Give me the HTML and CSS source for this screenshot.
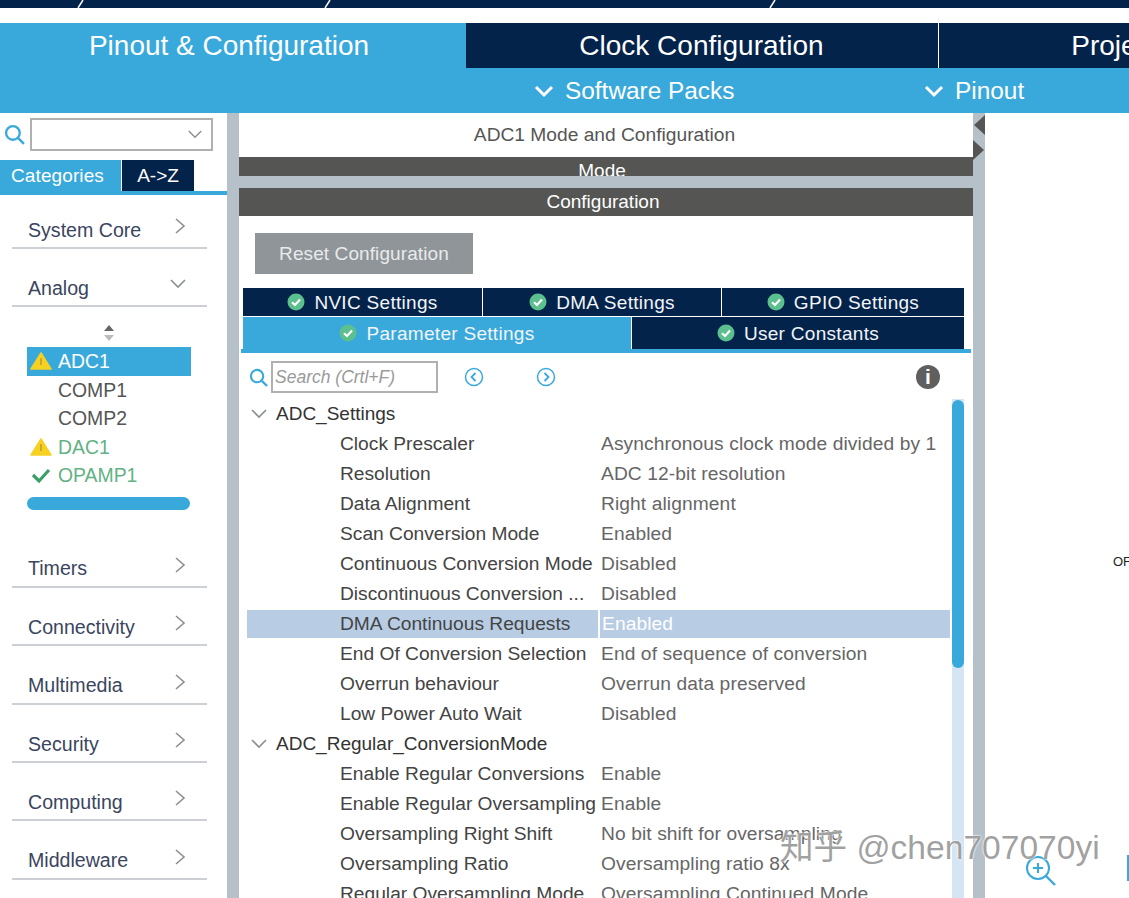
FILE: index.html
```html
<!DOCTYPE html>
<html lang="en">
<head>
    <meta charset="UTF-8">
    <meta name="viewport" content="width=device-width, initial-scale=1.0">
    <title>Pinout &amp; Configuration</title>
    <link rel="stylesheet" href="styles.css">
</head>
<body>
    <svg class="sprite" width="0" height="0">
        <symbol id="ok" viewBox="0 0 18 18">
            <circle cx="9" cy="9" r="8.5" fill="#5cbf8e"/>
            <path d="M5 9.2l3 2.8 5-5.4" fill="none" stroke="#fff" stroke-width="2.2"/>
        </symbol>
        <symbol id="warn" viewBox="0 0 22 18">
            <path d="M11 1L21 17H1z" fill="#f6d122" stroke="#f6d122" stroke-width="1.5" stroke-linejoin="round"/>
            <path d="M11 6v7" stroke="#b89a30" stroke-width="1.4"/>
        </symbol>
        <symbol id="lens" viewBox="0 0 20 20">
            <circle cx="8.5" cy="8.5" r="6.5" fill="none" stroke="#39a9dc" stroke-width="2.2"/>
            <path d="M13.5 13.5L19 19" stroke="#39a9dc" stroke-width="2.4"/>
        </symbol>
        <symbol id="right" viewBox="0 0 14 18">
            <path d="M3 2l8 7-8 7" fill="none" stroke="#8a8f94" stroke-width="1.6"/>
        </symbol>
        <symbol id="down" viewBox="0 0 18 12">
            <path d="M2 2l7 7 7-7" fill="none" stroke="#8a8f94" stroke-width="1.6"/>
        </symbol>
    </svg>

    <div class="app">
        <!-- window strip -->
        <div class="strip">
            <svg class="strip-art" width="1129" height="8">
                <path d="M78 8l5-8M325 8l5-8M770 8l5-8" stroke="#fff" stroke-width="1.5"/>
            </svg>
        </div>

        <!-- main tabs -->
        <div class="main-tabs">
            <div class="main-tab active">Pinout &amp; Configuration</div>
            <div class="main-tab clock">Clock Configuration</div>
            <div class="main-tab project">Project Manager</div>
        </div>
        <div class="sub-bar">
            <div class="sub-item packs">
                <svg class="sub-chev" width="20" height="14" viewBox="0 0 20 14"><path d="M2 3l8 8 8-8" fill="none" stroke="#fff" stroke-width="3"/></svg>
                Software Packs
            </div>
            <div class="sub-item">
                <svg class="sub-chev" width="20" height="14" viewBox="0 0 20 14"><path d="M2 3l8 8 8-8" fill="none" stroke="#fff" stroke-width="3"/></svg>
                Pinout
            </div>
        </div>

        <div class="workspace">
            <!-- left categories -->
            <aside class="sidebar">
                <div class="find">
                    <svg class="find-icon" width="21" height="21"><use href="#lens"/></svg>
                    <div class="find-box">
                        <svg width="16" height="11"><use href="#down"/></svg>
                    </div>
                </div>
                <div class="side-tabs">
                    <div class="side-tab active">Categories</div>
                    <div class="side-tab">A-&gt;Z</div>
                </div>
                <div class="cat first"><span>System Core</span><svg width="14" height="18"><use href="#right"/></svg></div>
                <div class="cat"><span>Analog</span><svg width="18" height="12"><use href="#down"/></svg></div>
                <div class="sort">
                    <svg width="12" height="18" viewBox="0 0 12 18"><path d="M6 1l5 6H1z" fill="#666"/><path d="M6 17l5-6H1z" fill="#bbb"/></svg>
                </div>
                <ul class="periph">
                    <li class="selected"><svg width="22" height="18"><use href="#warn"/></svg>ADC1</li>
                    <li>COMP1</li>
                    <li>COMP2</li>
                    <li class="green"><svg width="22" height="18"><use href="#warn"/></svg>DAC1</li>
                    <li class="green"><svg width="22" height="18" viewBox="0 0 22 18"><path d="M3 9l6 6 10-11" fill="none" stroke="#3c9f68" stroke-width="3.2"/></svg>OPAMP1</li>
                </ul>
                <div class="side-scroll"></div>
                <div class="cat timers"><span>Timers</span><svg width="14" height="18"><use href="#right"/></svg></div>
                <div class="cat"><span>Connectivity</span><svg width="14" height="18"><use href="#right"/></svg></div>
                <div class="cat"><span>Multimedia</span><svg width="14" height="18"><use href="#right"/></svg></div>
                <div class="cat"><span>Security</span><svg width="14" height="18"><use href="#right"/></svg></div>
                <div class="cat"><span>Computing</span><svg width="14" height="18"><use href="#right"/></svg></div>
                <div class="cat"><span>Middleware</span><svg width="14" height="18"><use href="#right"/></svg></div>
            </aside>

            <div class="splitter"></div>

            <!-- centre panel -->
            <section class="panel">
                <div class="panel-title">ADC1 Mode and Configuration</div>
                <div class="bar mode">Mode</div>
                <div class="bar-gap"></div>
                <div class="bar config">Configuration</div>
                <div class="reset-wrap">
                    <div class="reset">Reset Configuration</div>
                </div>

                <div class="set-tabs row-one">
                    <div class="set-tab nvic"><svg width="18" height="18"><use href="#ok"/></svg>NVIC Settings</div>
                    <div class="set-tab dma"><svg width="18" height="18"><use href="#ok"/></svg>DMA Settings</div>
                    <div class="set-tab"><svg width="18" height="18"><use href="#ok"/></svg>GPIO Settings</div>
                </div>
                <div class="set-tabs row-two">
                    <div class="set-tab active"><svg width="18" height="18"><use href="#ok"/></svg>Parameter Settings</div>
                    <div class="set-tab"><svg width="18" height="18"><use href="#ok"/></svg>User Constants</div>
                </div>

                <div class="search-row">
                    <svg class="search-icon" width="19" height="19"><use href="#lens"/></svg>
                    <div class="search-box">Search (Crtl+F)</div>
                    <svg class="nav-btn first-nav" width="20" height="20" viewBox="0 0 20 20"><circle cx="10" cy="10" r="8.5" fill="none" stroke="#39a9dc" stroke-width="1.5"/><path d="M11.5 6l-4 4 4 4" fill="none" stroke="#39a9dc" stroke-width="1.8"/></svg>
                    <svg class="nav-btn" width="20" height="20" viewBox="0 0 20 20"><circle cx="10" cy="10" r="8.5" fill="none" stroke="#39a9dc" stroke-width="1.5"/><path d="M8.5 6l4 4-4 4" fill="none" stroke="#39a9dc" stroke-width="1.8"/></svg>
                    <div class="info">i</div>
                </div>

                <div class="params">
                    <div class="tree">
                        <div class="head"><svg width="18" height="12"><use href="#down"/></svg>ADC_Settings</div>
                        <div class="row"><span>Clock Prescaler</span><span>Asynchronous clock mode divided by 1</span></div>
                        <div class="row"><span>Resolution</span><span>ADC 12-bit resolution</span></div>
                        <div class="row"><span>Data Alignment</span><span>Right alignment</span></div>
                        <div class="row"><span>Scan Conversion Mode</span><span>Enabled</span></div>
                        <div class="row"><span>Continuous Conversion Mode</span><span>Disabled</span></div>
                        <div class="row"><span>Discontinuous Conversion ...</span><span>Disabled</span></div>
                        <div class="row picked"><span>DMA Continuous Requests</span><span>Enabled</span></div>
                        <div class="row"><span>End Of Conversion Selection</span><span>End of sequence of conversion</span></div>
                        <div class="row"><span>Overrun behaviour</span><span>Overrun data preserved</span></div>
                        <div class="row"><span>Low Power Auto Wait</span><span>Disabled</span></div>
                        <div class="head"><svg width="18" height="12"><use href="#down"/></svg>ADC_Regular_ConversionMode</div>
                        <div class="row"><span>Enable Regular Conversions</span><span>Enable</span></div>
                        <div class="row"><span>Enable Regular Oversampling</span><span>Enable</span></div>
                        <div class="row"><span>Oversampling Right Shift</span><span>No bit shift for oversampling</span></div>
                        <div class="row"><span>Oversampling Ratio</span><span>Oversampling ratio 8x</span></div>
                        <div class="row"><span>Regular Oversampling Mode</span><span>Oversampling Continued Mode</span></div>
                    </div>
                    <div class="track"><div class="thumb"></div></div>
                </div>
            </section>

            <div class="splitter right-split">
                <svg class="collapse" width="12" height="50" viewBox="0 0 12 50"><path d="M12 1v20L1 11z" fill="#555"/><path d="M0 26v20l11-10z" fill="#555"/></svg>
            </div>

            <!-- chip canvas -->
            <section class="canvas">
                <span class="pin-label">OF</span>
                <svg class="zoom-in" width="32" height="32" viewBox="0 0 32 32"><circle cx="13" cy="13" r="11" fill="none" stroke="#39a9dc" stroke-width="2"/><path d="M13 8v10M8 13h10" stroke="#39a9dc" stroke-width="2"/><path d="M21 21l9 9" stroke="#39a9dc" stroke-width="2.4"/></svg>
                <div class="edge-tool"></div>
            </section>
        </div>

        <div class="watermark">知乎 @chen707070yi</div>
    </div>
</body>
</html>
```

FILE: styles.css
```css
* {
    box-sizing: border-box;
}
body {
    margin: 0;
    background: #fff;
    font-family: "Liberation Sans", Arial, sans-serif;
    color: #444;
}
.sprite {
    position: absolute;
}
.app {
    position: relative;
    width: 1129px;
    height: 898px;
    overflow: hidden;
    display: flex;
    flex-direction: column;
}
.strip {
    height: 8px;
    background: #03234b;
    margin-bottom: 15px;
    flex: none;
}
.strip-art {
    display: block;
}

/* main tabs */
.main-tabs {
    display: flex;
    height: 45px;
    flex: none;
    background: #03234b;
    overflow: hidden;
}
.main-tab {
    flex: none;
    font-size: 28px;
    line-height: 46px;
    color: #fff;
    text-align: center;
    white-space: nowrap;
}
.main-tab.active {
    width: 466px;
    background: #39a9dc;
    padding-right: 8px;
}
.main-tab.clock {
    width: 472px;
    margin-left: 1px;
    border-right: 1px solid #fff;
    padding-right: 2px;
}
.main-tab.project {
    width: 470px;
}
.sub-bar {
    display: flex;
    height: 45px;
    flex: none;
    background: #39a9dc;
    padding-left: 534px;
}
.sub-item {
    display: flex;
    align-items: center;
    gap: 11px;
    font-size: 24.4px;
    color: #fff;
    white-space: nowrap;
}
.sub-item.packs {
    width: 390px;
}

.workspace {
    flex: 1;
    display: flex;
    min-height: 0;
}

/* sidebar */
.sidebar {
    width: 227px;
    flex: none;
    background: #fff;
    overflow: hidden;
}
.find {
    display: flex;
    align-items: center;
    height: 47px;
    padding: 5px 14px 9px 4px;
    gap: 5px;
}
.find-box {
    flex: 1;
    height: 33px;
    border: 2px solid #b0b0b0;
    display: flex;
    align-items: center;
    justify-content: flex-end;
    padding-right: 8px;
}
.side-tabs {
    display: flex;
    height: 35px;
    border-bottom: 4px solid #39a9dc;
}
.side-tab {
    width: 72px;
    background: #03234b;
    color: #fff;
    font-size: 19px;
    line-height: 31px;
    text-align: center;
}
.side-tab.active {
    width: 122px;
    background: #39a9dc;
    border-right: 1px solid #fff;
    letter-spacing: 0.1px;
    padding-right: 6px;
}
.cat {
    display: flex;
    align-items: center;
    justify-content: space-between;
    width: 195px;
    height: 40px;
    margin: 18.4px 0 0 12px;
    padding: 4px 20px 0 16px;
    border-bottom: 2px solid #ccd0d4;
    font-size: 19.6px;
    color: #3a4560;
}
.cat.first {
    margin-top: 14px;
}
.cat svg {
    margin-top: -8px;
}
.sort {
    display: flex;
    justify-content: center;
    width: 218px;
    padding-top: 17px;
    height: 40px;
}
.periph {
    list-style: none;
    margin: 0;
    padding: 0 0 0 27px;
    width: 191px;
    box-sizing: content-box;
}
.periph li {
    display: flex;
    align-items: center;
    height: 28.5px;
    padding-left: 31px;
    font-size: 19.4px;
    color: #555;
    position: relative;
    width: 164px;
}
.periph li svg {
    position: absolute;
    left: 3px;
    top: 5px;
}
.periph li.selected {
    background: #39a9dc;
    color: #fff;
}
.periph li.green {
    color: #62b283;
}
.side-scroll {
    width: 163px;
    height: 13px;
    margin: 7px 0 0 27px;
    background: #39a9dc;
    border-radius: 7px;
}
.cat.timers {
    margin-top: 38px;
}
.splitter {
    width: 12px;
    flex: none;
    background: #b5c0c8;
}

/* centre panel */
.panel {
    width: 734px;
    flex: none;
    display: flex;
    flex-direction: column;
    overflow: hidden;
}
.panel-title {
    height: 44px;
    flex: none;
    line-height: 44px;
    text-align: center;
    font-size: 19.2px;
    color: #555;
    padding-right: 3px;
}
.bar {
    flex: none;
    background: #555654;
    color: #fff;
    text-align: center;
    font-size: 19px;
    overflow: hidden;
    padding-right: 8px;
}
.bar.mode {
    height: 19px;
    line-height: 27px;
}
.bar-gap {
    height: 12px;
    flex: none;
    background: #b5c0c8;
}
.bar.config {
    height: 28px;
    line-height: 28px;
    padding-right: 6px;
}
.reset-wrap {
    flex: none;
    height: 72px;
    padding: 17px 0 0 16px;
}
.reset {
    width: 218px;
    height: 41px;
    line-height: 41px;
    background: #8f9599;
    color: #e8eaec;
    text-align: center;
    font-size: 19px;
    letter-spacing: 0.1px;
}
.set-tabs {
    flex: none;
    display: flex;
    gap: 1px;
    width: 721px;
    margin-left: 4px;
    background: #fff;
}
.set-tabs.row-one {
    height: 28px;
    margin-bottom: 1px;
}
.set-tabs.row-two {
    height: 32px;
}
.set-tab {
    flex: 1;
    display: flex;
    align-items: center;
    justify-content: center;
    gap: 9px;
    padding-top: 2px;
    background: #03234b;
    color: #f2f4f8;
    font-size: 19px;
    letter-spacing: 0.3px;
}
.set-tab svg {
    margin-top: -2px;
}
.set-tab.nvic {
    flex: none;
    width: 239px;
}
.set-tab.dma {
    flex: none;
    width: 238px;
}
.set-tab.active {
    background: #39a9dc;
    flex: none;
    width: 388px;
}
.search-row {
    flex: none;
    position: relative;
    height: 50px;
    margin-left: 2px;
    border-top: 4px solid #39a9dc;
    width: 730px;
    display: flex;
    align-items: center;
    padding: 2px 0 0 8px;
}
.search-box {
    width: 167px;
    height: 32px;
    margin-left: 3px;
    border: 2px solid #b0b0b0;
    color: #9a9a9a;
    font-style: italic;
    font-size: 17.5px;
    line-height: 28px;
    padding-left: 2px;
    white-space: nowrap;
    overflow: hidden;
}
.nav-btn {
    margin-left: 52px;
}
.nav-btn.first-nav {
    margin-left: 26px;
}
.info {
    width: 24px;
    height: 24px;
    margin-left: 360px;
    border-radius: 50%;
    background: #5f5f5f;
    color: #fff;
    font-size: 21px;
    font-weight: bold;
    line-height: 24px;
    text-align: center;
}
.params {
    flex: 1;
    min-height: 0;
    display: flex;
    margin-left: 8px;
    overflow: hidden;
}
.tree {
    width: 703px;
    flex: none;
}
.head {
    display: flex;
    align-items: center;
    height: 30px;
    font-size: 19px;
    color: #333;
    padding-left: 3px;
    gap: 8px;
}
.row {
    display: grid;
    grid-template-columns: 258px 1fr;
    height: 30px;
    align-items: center;
    font-size: 19.2px;
    padding-left: 93px;
    color: #444;
    white-space: nowrap;
}
.row span + span {
    color: #666;
    padding-left: 3px;
    letter-spacing: 0.1px;
}
.row.picked {
    background: linear-gradient(#fff 1px, #b8cde4 1px, #b8cde4 29px, #fff 29px);
}
.row.picked span + span {
    color: #fff;
    border-left: 2px solid #fff;
    height: 28px;
    line-height: 28px;
    padding-left: 2px;
}
.track {
    width: 12px;
    margin-left: 2px;
    background: #d6e5f3;
    padding-top: 1px;
}
.thumb {
    height: 268px;
    background: #39a9dc;
    border-radius: 6px;
}

/* chip canvas */
.canvas {
    flex: 1;
    position: relative;
    background: #fff;
}
.right-split {
    position: relative;
}
.collapse {
    position: absolute;
    left: 0;
    top: 1px;
}
.pin-label {
    position: absolute;
    left: 128px;
    top: 441px;
    font-size: 13px;
    color: #222;
}
.zoom-in {
    position: absolute;
    left: 40px;
    top: 742px;
}
.edge-tool {
    position: absolute;
    right: 0;
    top: 742px;
    width: 2px;
    height: 26px;
    background: #39a9dc;
}
.watermark {
    position: absolute;
    left: 780px;
    top: 826px;
    font-family: "Liberation Sans", "Noto Sans CJK SC", sans-serif;
    font-size: 33.6px;
    line-height: 44px;
    color: rgba(130, 130, 130, 0.75);
    text-shadow: 0 0 2px #fff, 0 0 2px #fff;
    white-space: nowrap;
}
```
